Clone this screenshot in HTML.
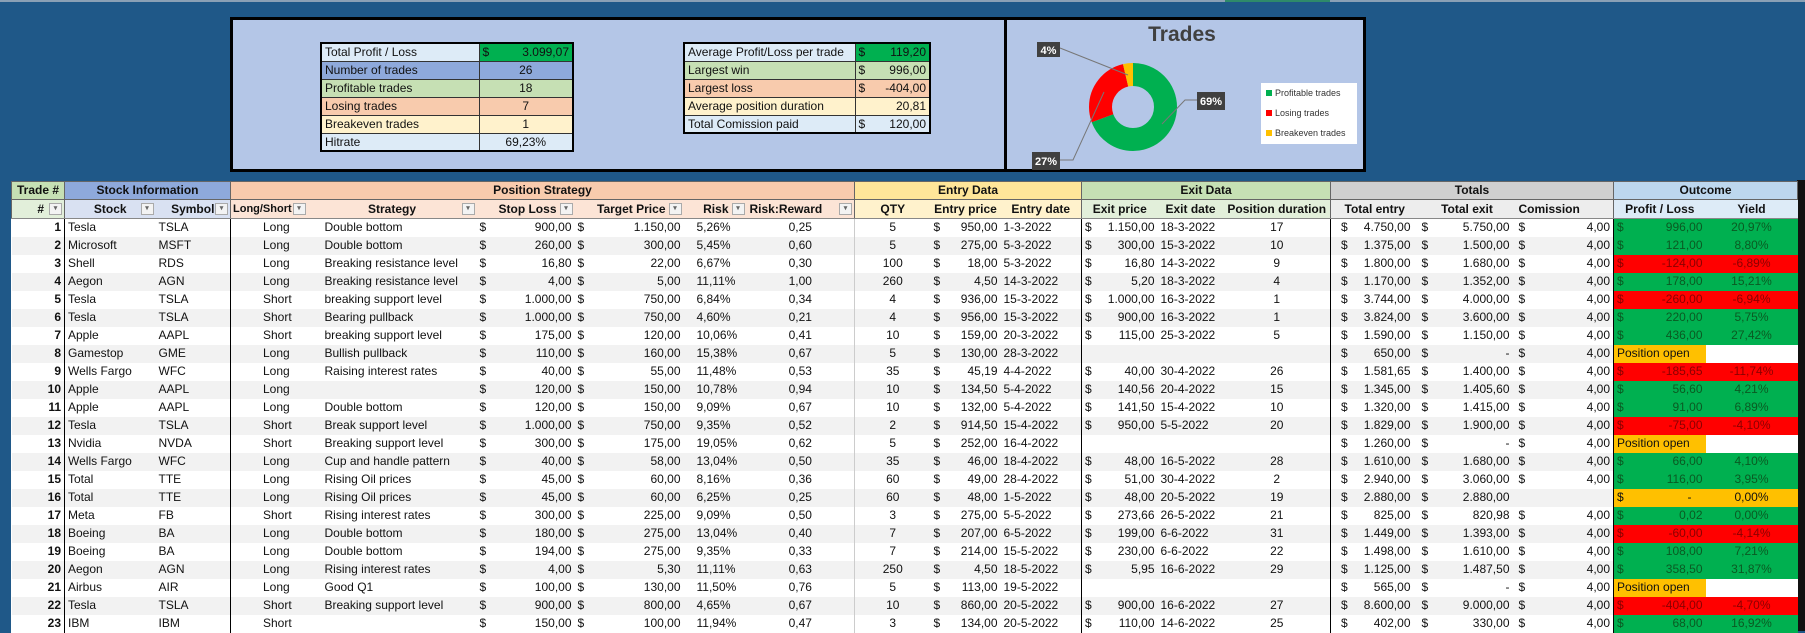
<!DOCTYPE html>
<html><head><meta charset="utf-8"><style>
*{margin:0;padding:0;box-sizing:border-box}
body{width:1805px;height:631px;background:#1f5888;position:relative;overflow:hidden;font-family:"Liberation Sans",Arial,sans-serif;font-size:12px;color:#111}
.abs{position:absolute}
.sum{left:230px;top:17px;width:1136px;height:155px;background:#b4c6e7;border:3px solid #000}
.st{position:absolute;border-collapse:collapse;border:2px solid #000}
.st td{border:1px solid #333;height:18px;padding:0 3px;font-size:12px;white-space:nowrap}
.c{text-align:center}.r{text-align:right}
.d{float:left}
#tb{position:absolute;left:11px;top:181px;border-collapse:collapse;table-layout:fixed;background:#fff}
#tb td{height:18px;padding:0 3px;white-space:nowrap;overflow:hidden;font-size:12px;line-height:17px}
#tb tr.h1 td{height:17px;font-weight:bold;text-align:center;border:1px solid #666}
#tb tr.h2 td{height:19px;font-weight:bold;text-align:center;border-top:1px solid #888;border-bottom:1px solid #888;position:relative}
#tb tr.h2 td.bl{border-left:1px solid #666}
#tb tr.h2 td i{position:absolute;right:2px;top:3px;width:13px;height:12px;background:#f3f3f3;border:1px solid #aaa;font-style:normal;font-size:7px;line-height:10px;color:#666;text-align:center}
#tb tbody tr:nth-child(even) td{background:#f2f2f2}
#tb td.g{background:#00b050!important;color:#0a5a22}
#tb td.rd{background:#ff0000!important;color:#8a0000}
#tb td.o{background:#ffc000!important}
#tb td.w{background:#fff!important}
.bl{border-left:1px solid #000}
</style></head><body>
<div class="abs" style="left:0;top:0;width:1805px;height:2px;background:#8aa0b5"></div>
<div class="abs" style="left:1225px;top:0;width:105px;height:2px;background:#2e8a6a"></div>
<div class="abs sum"></div>
<div class="abs" style="left:1004px;top:17px;width:3px;height:155px;background:#000"></div>

<table class="st" style="left:320px;top:42px;width:254px">
<tr><td style="background:#ddebf7;width:158px">Total Profit / Loss</td><td class="r" style="background:#00b050"><span class="d">$</span>3.099,07</td></tr>
<tr><td style="background:#8ea9db">Number of trades</td><td class="c" style="background:#8ea9db">26</td></tr>
<tr><td style="background:#c6e0b4">Profitable trades</td><td class="c" style="background:#c6e0b4">18</td></tr>
<tr><td style="background:#f8cbad">Losing trades</td><td class="c" style="background:#f8cbad">7</td></tr>
<tr><td style="background:#fff2cc">Breakeven trades</td><td class="c" style="background:#fff2cc">1</td></tr>
<tr><td style="background:#ddebf7">Hitrate</td><td class="c" style="background:#ddebf7">69,23%</td></tr>
</table>
<table class="st" style="left:683px;top:42px;width:248px">
<tr><td style="background:#ddebf7;width:171px">Average Profit/Loss per trade</td><td class="r" style="background:#00b050"><span class="d">$</span>119,20</td></tr>
<tr><td style="background:#c6e0b4">Largest win</td><td class="r" style="background:#c6e0b4"><span class="d">$</span>996,00</td></tr>
<tr><td style="background:#f8cbad">Largest loss</td><td class="r" style="background:#f8cbad"><span class="d">$</span>-404,00</td></tr>
<tr><td style="background:#fff2cc">Average position duration</td><td class="r" style="background:#fff2cc">20,81</td></tr>
<tr><td style="background:#ddebf7">Total Comission paid</td><td class="r" style="background:#ddebf7"><span class="d">$</span>120,00</td></tr>
</table>

<div class="abs" style="left:1130px;top:23px;width:104px;text-align:center;font-size:21px;font-weight:bold;color:#404040">Trades</div>
<svg class="abs" style="left:1007px;top:20px" width="356" height="150">
<g transform="translate(126,87) rotate(-90)">
<circle r="32.5" fill="none" stroke="#00b050" stroke-width="23" stroke-dasharray="141.4 300"/>
<circle r="32.5" fill="none" stroke="#ff0000" stroke-width="23" stroke-dasharray="0 141.4 55 300"/>
<circle r="32.5" fill="none" stroke="#ffc000" stroke-width="23" stroke-dasharray="0 196.4 7.9 300"/>
</g>
<polyline points="53,28 121,55" fill="none" stroke="#777" stroke-width="1"/>
<polyline points="190,80 178,80 155,104" fill="none" stroke="#777" stroke-width="1"/>
<polyline points="53,140 66,140 97,72" fill="none" stroke="#777" stroke-width="1"/>
<rect x="30" y="22" width="23" height="15" fill="#404040"/><text x="41.5" y="34" fill="#fff" font-size="11" font-weight="bold" text-anchor="middle" font-family="Liberation Sans">4%</text>
<rect x="190" y="72" width="28" height="18" fill="#404040"/><text x="204" y="85" fill="#fff" font-size="11" font-weight="bold" text-anchor="middle" font-family="Liberation Sans">69%</text>
<rect x="25" y="132" width="28" height="18" fill="#404040"/><text x="39" y="145" fill="#fff" font-size="11" font-weight="bold" text-anchor="middle" font-family="Liberation Sans">27%</text>
<rect x="254" y="63" width="96" height="61" fill="#fff"/>
<rect x="259" y="70" width="6" height="6" fill="#00b050"/><text x="268" y="76" font-size="9" fill="#333" font-family="Liberation Sans">Profitable trades</text>
<rect x="259" y="90" width="6" height="6" fill="#ff0000"/><text x="268" y="96" font-size="9" fill="#333" font-family="Liberation Sans">Losing trades</text>
<rect x="259" y="110" width="6" height="6" fill="#ffc000"/><text x="268" y="116" font-size="9" fill="#333" font-family="Liberation Sans">Breakeven trades</text>
</svg>

<div class="abs" style="left:1797px;top:180px;width:8px;height:451px;background:#111"></div>

<table id="tb">
<colgroup><col style="width:53px"><col style="width:91px"><col style="width:75px"><col style="width:77px"><col style="width:169px"><col style="width:98px"><col style="width:109px"><col style="width:63px"><col style="width:108px"><col style="width:76px"><col style="width:70px"><col style="width:81px"><col style="width:76px"><col style="width:66px"><col style="width:107px"><col style="width:88px"><col style="width:97px"><col style="width:98px"><col style="width:92px"><col style="width:92px"></colgroup>
<thead>
<tr class="h1"><td style="background:#c6e0b4">Trade #</td><td colspan="2" style="background:#8ea9db">Stock Information</td><td colspan="6" style="background:#f8cbad">Position Strategy</td><td colspan="3" style="background:#ffe699">Entry Data</td><td colspan="3" style="background:#c6e0b4">Exit Data</td><td colspan="3" style="background:#d0d0d0">Totals</td><td colspan="2" style="background:#bdd7ee">Outcome</td></tr>
<tr class="h2">
<td class="bl" style="background:#e2efda;text-align:right;padding-right:20px">#<i>▾</i></td>
<td class="bl" style="background:#d9e1f2">Stock<i>▾</i></td><td style="background:#d9e1f2">Symbol<i>▾</i></td>
<td class="bl" style="background:#fce4d6;text-align:left;font-size:11px;padding-left:2px">Long/Short<i>▾</i></td><td style="background:#fce4d6">Strategy<i>▾</i></td><td style="background:#fce4d6;text-align:right;padding-right:18px">Stop Loss<i>▾</i></td><td style="background:#fce4d6;text-align:right;padding-right:18px">Target Price<i>▾</i></td><td style="background:#fce4d6;text-align:right;padding-right:18px">Risk<i>▾</i></td><td style="background:#fce4d6;text-align:left">Risk:Reward<i>▾</i></td>
<td class="bl" style="background:#fff2cc">QTY</td><td style="background:#fff2cc">Entry price</td><td style="background:#fff2cc">Entry date</td>
<td class="bl" style="background:#e2efda">Exit price</td><td style="background:#e2efda">Exit date</td><td style="background:#e2efda">Position duration</td>
<td class="bl" style="background:#ededed">Total entry</td><td style="background:#ededed">Total exit</td><td style="background:#ededed;text-align:left">Comission</td>
<td class="bl" style="background:#ddebf7">Profit / Loss</td><td style="background:#ddebf7">Yield</td></tr>
</thead>
<tbody id="bd"></tbody>
</table>
<script>
var R=[
[1,"Tesla","TSLA","Long","Double bottom","900,00","1.150,00","5,26%","0,25","5","950,00","1-3-2022","1.150,00","18-3-2022","17","4.750,00","5.750,00","4,00","996,00","20,97%","g"],
[2,"Microsoft","MSFT","Long","Double bottom","260,00","300,00","5,45%","0,60","5","275,00","5-3-2022","300,00","15-3-2022","10","1.375,00","1.500,00","4,00","121,00","8,80%","g"],
[3,"Shell","RDS","Long","Breaking resistance level","16,80","22,00","6,67%","0,30","100","18,00","5-3-2022","16,80","14-3-2022","9","1.800,00","1.680,00","4,00","-124,00","-6,89%","rd"],
[4,"Aegon","AGN","Long","Breaking resistance level","4,00","5,00","11,11%","1,00","260","4,50","14-3-2022","5,20","18-3-2022","4","1.170,00","1.352,00","4,00","178,00","15,21%","g"],
[5,"Tesla","TSLA","Short","breaking support level","1.000,00","750,00","6,84%","0,34","4","936,00","15-3-2022","1.000,00","16-3-2022","1","3.744,00","4.000,00","4,00","-260,00","-6,94%","rd"],
[6,"Tesla","TSLA","Short","Bearing pullback","1.000,00","750,00","4,60%","0,21","4","956,00","15-3-2022","900,00","16-3-2022","1","3.824,00","3.600,00","4,00","220,00","5,75%","g"],
[7,"Apple","AAPL","Short","breaking support level","175,00","120,00","10,06%","0,41","10","159,00","20-3-2022","115,00","25-3-2022","5","1.590,00","1.150,00","4,00","436,00","27,42%","g"],
[8,"Gamestop","GME","Long","Bullish pullback","110,00","160,00","15,38%","0,67","5","130,00","28-3-2022","","","","650,00","-","4,00","","","o"],
[9,"Wells Fargo","WFC","Long","Raising interest rates","40,00","55,00","11,48%","0,53","35","45,19","4-4-2022","40,00","30-4-2022","26","1.581,65","1.400,00","4,00","-185,65","-11,74%","rd"],
[10,"Apple","AAPL","Long","","120,00","150,00","10,78%","0,94","10","134,50","5-4-2022","140,56","20-4-2022","15","1.345,00","1.405,60","4,00","56,60","4,21%","g"],
[11,"Apple","AAPL","Long","Double bottom","120,00","150,00","9,09%","0,67","10","132,00","5-4-2022","141,50","15-4-2022","10","1.320,00","1.415,00","4,00","91,00","6,89%","g"],
[12,"Tesla","TSLA","Short","Break support level","1.000,00","750,00","9,35%","0,52","2","914,50","15-4-2022","950,00","5-5-2022","20","1.829,00","1.900,00","4,00","-75,00","-4,10%","rd"],
[13,"Nvidia","NVDA","Short","Breaking support level","300,00","175,00","19,05%","0,62","5","252,00","16-4-2022","","","","1.260,00","-","4,00","","","o"],
[14,"Wells Fargo","WFC","Long","Cup and handle pattern","40,00","58,00","13,04%","0,50","35","46,00","18-4-2022","48,00","16-5-2022","28","1.610,00","1.680,00","4,00","66,00","4,10%","g"],
[15,"Total","TTE","Long","Rising Oil prices","45,00","60,00","8,16%","0,36","60","49,00","28-4-2022","51,00","30-4-2022","2","2.940,00","3.060,00","4,00","116,00","3,95%","g"],
[16,"Total","TTE","Long","Rising Oil prices","45,00","60,00","6,25%","0,25","60","48,00","1-5-2022","48,00","20-5-2022","19","2.880,00","2.880,00","","-","0,00%","y"],
[17,"Meta","FB","Short","Rising interest rates","300,00","225,00","9,09%","0,50","3","275,00","5-5-2022","273,66","26-5-2022","21","825,00","820,98","4,00","0,02","0,00%","g"],
[18,"Boeing","BA","Long","Double bottom","180,00","275,00","13,04%","0,40","7","207,00","6-5-2022","199,00","6-6-2022","31","1.449,00","1.393,00","4,00","-60,00","-4,14%","rd"],
[19,"Boeing","BA","Long","Double bottom","194,00","275,00","9,35%","0,33","7","214,00","15-5-2022","230,00","6-6-2022","22","1.498,00","1.610,00","4,00","108,00","7,21%","g"],
[20,"Aegon","AGN","Long","Rising interest rates","4,00","5,30","11,11%","0,63","250","4,50","18-5-2022","5,95","16-6-2022","29","1.125,00","1.487,50","4,00","358,50","31,87%","g"],
[21,"Airbus","AIR","Long","Good Q1","100,00","130,00","11,50%","0,76","5","113,00","19-5-2022","","","","565,00","-","4,00","","","o"],
[22,"Tesla","TSLA","Short","Breaking support level","900,00","800,00","4,65%","0,67","10","860,00","20-5-2022","900,00","16-6-2022","27","8.600,00","9.000,00","4,00","-404,00","-4,70%","rd"],
[23,"IBM","IBM","Short","","150,00","100,00","11,94%","0,47","3","134,00","20-5-2022","110,00","14-6-2022","25","402,00","330,00","4,00","68,00","16,92%","g"]];
function m(v,cls){return '<td class="r'+(cls?' '+cls:'')+'">'+(v?'<span class="d">$</span>'+v:'')+'</td>';}
var h='';
R.forEach(function(r){
h+='<tr><td class="r" style="font-weight:bold">'+r[0]+'</td><td class="bl">'+r[1]+'</td><td>'+r[2]+'</td><td class="bl" style="padding-left:32px">'+r[3]+'</td><td style="padding-left:17px">'+r[4]+'</td>'+m(r[5])+m(r[6])+'<td style="padding-left:13px">'+r[7]+'</td><td class="c">'+r[8]+'</td>'+
'<td class="c bl" style="border-left-color:#ccc">'+r[9]+'</td>'+m(r[10])+'<td>'+r[11]+'</td>'+
'<td class="r bl">'+(r[12]?'<span class="d">$</span>'+r[12]:'')+'</td><td>'+r[13]+'</td><td class="c">'+r[14]+'</td>'+
'<td class="r bl" style="padding-right:8px">'+'<span class="d" style="margin-left:7px">$</span>'+r[15]+'</td>'+'<td class="r" style="padding-right:6px"><span class="d">$</span>'+r[16]+'</td>'+m(r[17]);
if(r[20]=='o')h+='<td class="o bl">Position open</td><td class="w"></td>';
else if(r[20]=='y')h+='<td class="r o bl" style="padding-right:14px"><span class="d">$</span>'+r[18]+'</td><td class="c o">'+r[19]+'</td>';
else h+='<td class="r '+r[20]+' bl"><span class="d">$</span>'+r[18]+'</td><td class="c '+r[20]+'">'+r[19]+'</td>';
h+='</tr>';});
document.getElementById('bd').innerHTML=h;
</script>
</body></html>
